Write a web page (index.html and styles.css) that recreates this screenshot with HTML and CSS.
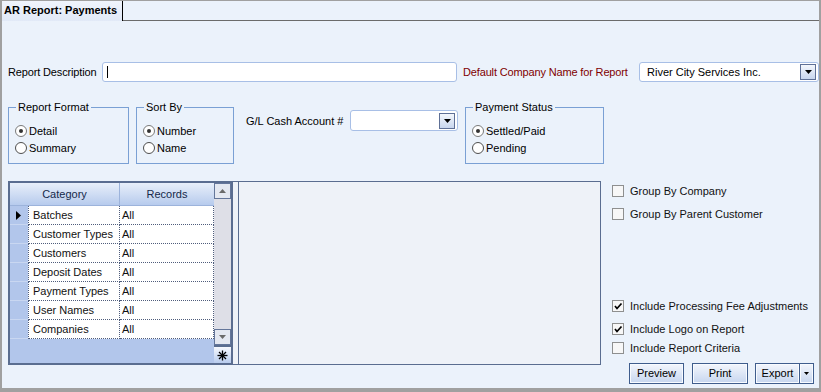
FILE: index.html
```html
<!DOCTYPE html>
<html>
<head>
<meta charset="utf-8">
<title>AR Report: Payments</title>
<link rel="stylesheet" href="styles.css">
</head>
<body>
<div class="window">
  <div class="tabbar">
    <div class="tab">AR Report: Payments</div>
    <div class="tabrest"></div>
  </div>
  <div class="content">
    <div class="row1">
      <span class="lbl desc-lbl">Report Description</span>
      <div class="textbox desc"><span class="caret"></span></div>
      <span class="lbl red co-lbl">Default Company Name for Report</span>
      <div class="textbox combo co">
        <span class="val">River City Services Inc.</span>
        <span class="ddbtn"><svg width="7" height="4" viewBox="0 0 7 4"><polygon points="0,0 7,0 3.5,4" fill="#000"/></svg></span>
      </div>
    </div>

    <div class="row2">
      <fieldset class="group g-format">
        <legend>Report Format</legend>
        <div class="opts">
          <div class="opt"><span class="radio on"></span>Detail</div>
          <div class="opt"><span class="radio"></span>Summary</div>
        </div>
      </fieldset>
      <fieldset class="group g-sort">
        <legend>Sort By</legend>
        <div class="opts">
          <div class="opt"><span class="radio on"></span>Number</div>
          <div class="opt"><span class="radio"></span>Name</div>
        </div>
      </fieldset>
      <div class="glblock">
        <span class="lbl gl-lbl">G/L Cash Account #</span>
        <div class="textbox combo gl">
          <span class="val"></span>
          <span class="ddbtn"><svg width="7" height="4" viewBox="0 0 7 4"><polygon points="0,0 7,0 3.5,4" fill="#000"/></svg></span>
        </div>
      </div>
      <fieldset class="group g-status">
        <legend>Payment Status</legend>
        <div class="opts">
          <div class="opt"><span class="radio on"></span>Settled/Paid</div>
          <div class="opt"><span class="radio"></span>Pending</div>
        </div>
      </fieldset>
    </div>

    <div class="row3">
      <div class="gridbox">
        <div class="gtable">
          <div class="ghead"><div class="gh cat">Category</div><div class="gh rec">Records</div></div>
          <div class="grow"><div class="rh"><svg width="5" height="9" viewBox="0 0 5 9"><polygon points="0,0 5,4.5 0,9" fill="#000"/></svg></div><div class="gc c1">Batches</div><div class="gc c2">All</div></div>
          <div class="grow"><div class="rh"></div><div class="gc c1">Customer Types</div><div class="gc c2">All</div></div>
          <div class="grow"><div class="rh"></div><div class="gc c1">Customers</div><div class="gc c2">All</div></div>
          <div class="grow"><div class="rh"></div><div class="gc c1">Deposit Dates</div><div class="gc c2">All</div></div>
          <div class="grow"><div class="rh"></div><div class="gc c1">Payment Types</div><div class="gc c2">All</div></div>
          <div class="grow"><div class="rh"></div><div class="gc c1">User Names</div><div class="gc c2">All</div></div>
          <div class="grow"><div class="rh"></div><div class="gc c1">Companies</div><div class="gc c2">All</div></div>
          <div class="gfill"></div>
        </div>
        <div class="vscroll">
          <div class="sbtn"><svg width="7" height="4" viewBox="0 0 7 4"><polygon points="0,4 7,4 3.5,0" fill="#6a6a6a"/></svg></div>
          <div class="strack"></div>
          <div class="sbtn"><svg width="7" height="4" viewBox="0 0 7 4"><polygon points="0,0 7,0 3.5,4" fill="#6a6a6a"/></svg></div>
          <div class="newrow"><svg width="11" height="11" viewBox="0 0 11 11"><g stroke="#000" stroke-width="1.3"><line x1="5.5" y1="0.5" x2="5.5" y2="10.5"/><line x1="0.5" y1="5.5" x2="10.5" y2="5.5"/><line x1="2" y1="2" x2="9" y2="9"/><line x1="9" y1="2" x2="2" y2="9"/></g></svg></div>
        </div>
      </div>
      <div class="splitter"></div>
      <div class="panel"></div>

      <div class="rightcol">
        <div class="checks top">
          <div class="chk"><span class="box"></span>Group By Company</div>
          <div class="chk gap5"><span class="box"></span>Group By Parent Customer</div>
        </div>
        <div class="checks bottom">
          <div class="chk"><span class="box"><svg width="10" height="10" viewBox="0 0 10 10"><polyline points="2,5 4,7.5 8.5,2.5" fill="none" stroke="#000" stroke-width="1.7"/></svg></span>Include Processing Fee Adjustments</div>
          <div class="chk gap5"><span class="box"><svg width="10" height="10" viewBox="0 0 10 10"><polyline points="2,5 4,7.5 8.5,2.5" fill="none" stroke="#000" stroke-width="1.7"/></svg></span>Include Logo on Report</div>
          <div class="chk gap1"><span class="box"></span>Include Report Criteria</div>
          <div class="buttons">
            <div class="btn preview">Preview</div>
            <div class="btn print">Print</div>
            <div class="split">
              <div class="btn export">Export</div>
              <div class="btn arrow"><svg width="5" height="3" viewBox="0 0 5 3"><polygon points="0,0 5,0 2.5,3" fill="#000"/></svg></div>
            </div>
          </div>
        </div>
      </div>
    </div>
  </div>
</div>
</body>
</html>
```
FILE: styles.css
```css
* { box-sizing: border-box; }
html, body { margin: 0; padding: 0; }
body {
  font-family: "Liberation Sans", Arial, sans-serif;
  font-size: 11px;
  color: #000;
  background: #ebf2fb;
}
.window {
  width: 821px;
  height: 392px;
  background: #ebf2fb;
  border-top: 1px solid #a0a0a0;
  border-left: 2px solid #a0a0a0;
  border-right: 2px solid #a0a0a0;
  border-bottom: 4px solid #a0a0a0;
  display: flex;
  flex-direction: column;
  overflow: hidden;
}
.tabbar { display: flex; height: 20px; flex: none; }
.tab {
  width: 121px;
  border-right: 1px solid #000;
  font-weight: bold;
  line-height: 19px;
  padding-left: 2px;
  white-space: nowrap;
  background: linear-gradient(#f0f4fc, #e1e9f7);
}
.tabrest { flex: 1; border-bottom: 1px solid #6b6b6b; }
.content { padding-left: 6px; flex: 1; }

.lbl { white-space: nowrap; }
.red { color: #800000; }

.row1 { display: flex; align-items: center; height: 20px; margin-top: 41px; }
.desc-lbl { width: 94px; letter-spacing: -0.15px; }
.textbox {
  height: 20px;
  border: 1px solid #a8bfe6;
  border-radius: 3px;
  background: #fff;
  display: flex;
  align-items: center;
}
.desc { width: 355px; }
.caret { width: 1px; height: 12px; background: #000; margin-left: 4px; }
.co-lbl { width: 176px; margin-left: 6px; letter-spacing: -0.15px; }
.co { width: 180px; }
.combo .val { flex: 1; padding-left: 7px; white-space: nowrap; }
.ddbtn {
  width: 16px;
  height: 16px;
  margin-right: 2px;
  border: 1px solid #5f7096;
  background: linear-gradient(#f4f7fc, #c8d6ee);
  display: flex;
  align-items: center;
  justify-content: center;
}

.row2 { display: flex; align-items: flex-start; margin-top: 19px; }
.group {
  margin: 0;
  padding: 0 6px 6px 6px;
  border: 1px solid #7aa0d4;
  height: 63px;
  min-width: 0;
}
.group legend {
  padding: 0 2px;
  margin-left: 1px;
  line-height: 13px;
  font-size: 11px;
}
.g-format { width: 121px; }
.g-sort { width: 98px; margin-left: 7px; }
.g-status { width: 139px; margin-left: 7px; }
.opts { padding-top: 8px; }
.opt { display: flex; align-items: center; height: 17px; white-space: nowrap; }
.radio {
  width: 12px;
  height: 12px;
  border-radius: 50%;
  border: 1px solid #4e4e4e;
  background: #fff;
  margin-right: 2px;
  display: flex;
  align-items: center;
  justify-content: center;
  flex: none;
}
.radio.on { border-color: #7a7a7a; }
.radio.on::after {
  content: "";
  width: 4px;
  height: 4px;
  border-radius: 50%;
  background: #333;
}
.glblock { display: flex; align-items: center; margin-left: 12px; margin-top: 9px; }
.gl-lbl { width: 104px; }
.gl { width: 108px; height: 21px; }

.row3 { display: flex; align-items: flex-start; margin-top: 17px; }
.gridbox {
  width: 225px;
  height: 184px;
  border: 2px solid #5a6d90;
  display: flex;
  flex: none;
}
.gtable {
  width: 204px;
  height: 180px;
  background: #b2c6eb;
  display: flex;
  flex-direction: column;
}
.ghead {
  height: 23px;
  display: flex;
  border-bottom: 1px solid #9cb3db;
  background: linear-gradient(#e8effa, #b7cbed);
  color: #16294a;
}
.gh { line-height: 22px; text-align: center; }
.gh.cat { width: 110px; border-right: 1px solid #9cb3db; }
.gh.rec { width: 94px; }
.grow { display: flex; height: 19px; }
.rh {
  width: 18px;
  background: #b2c6eb;
  border-bottom: 1px solid #c9d7f1;
  display: flex;
  align-items: center;
  justify-content: center;
  padding-right: 2px;
}
.gc {
  background: #fff;
  line-height: 18px;
  border-bottom: 1px dotted #4f5d7c;
  border-right: 1px dotted #4f5d7c;
  white-space: nowrap;
  overflow: hidden;
  color: #111;
}
.c1 { width: 92px; border-left: 1px dotted #4f5d7c; padding-left: 4px; }
.c2 { width: 94px; padding-left: 2px; }
.gfill { flex: 1; background: #b2c6eb; }

.vscroll {
  width: 17px;
  height: 180px;
  display: flex;
  flex-direction: column;
  background: #5a6d90;
}
.sbtn {
  height: 16px;
  border: 1px solid #64769a;
  background: #e4e8f1;
  display: flex;
  align-items: center;
  justify-content: center;
}
.strack { height: 130px; background: #dedfe7; }
.newrow {
  height: 16px;
  margin-top: 2px;
  background: linear-gradient(#f6f8fd, #b8ccee);
  display: flex;
  align-items: center;
  justify-content: center;
}

.splitter {
  width: 5px;
  height: 184px;
  background: #eef2f8;
  border-top: 1px solid #5a6d90;
  border-bottom: 1px solid #5a6d90;
  flex: none;
}
.panel {
  width: 363px;
  height: 184px;
  background: #eef2f8;
  border: 1px solid #5a6d90;
  flex: none;
}

.rightcol {
  width: 218px;
  height: 203px;
  display: flex;
  flex-direction: column;
  justify-content: space-between;
  padding-top: 1px;
}
.checks { padding-left: 11px; }
.chk { display: flex; align-items: center; height: 18px; white-space: nowrap; color: #111; }
.chk.gap5 { margin-top: 5px; }
.chk.gap1 { margin-top: 1px; }
.box {
  width: 12px;
  height: 12px;
  border: 1px solid #8e8f8f;
  background: #f7f7f7;
  margin-right: 6px;
  display: flex;
  align-items: center;
  justify-content: center;
  flex: none;
}
.buttons {
  display: flex;
  justify-content: flex-end;
  padding-right: 5px;
  margin-top: 6px;
  margin-left: -11px;
}
.btn {
  height: 21px;
  border: 1px solid #3f5d8d;
  background: linear-gradient(#f3f6fc, #c7d6ef);
  box-shadow: inset 0 0 0 1px #f8fbff;
  text-align: center;
  line-height: 19px;
  color: #000;
}
.preview { width: 55px; }
.print { width: 56px; margin-left: 8px; }
.split { display: flex; margin-left: 7px; }
.export { width: 45px; }
.arrow {
  width: 14px;
  border-left: none;
  display: flex;
  align-items: center;
  justify-content: center;
}
```
